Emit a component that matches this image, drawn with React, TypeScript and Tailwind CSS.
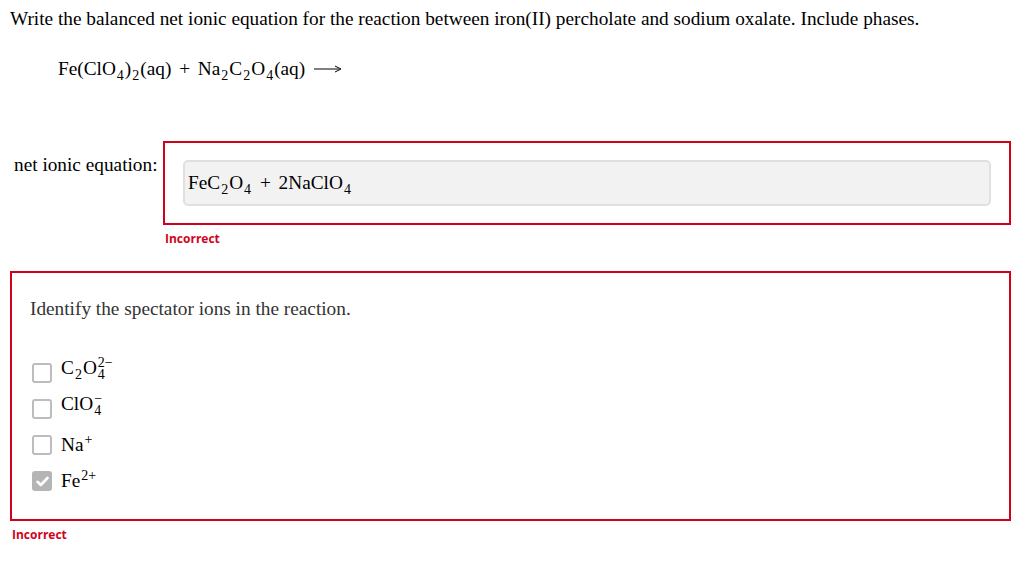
import React from "react";

const serif = "font-['Liberation_Serif','Times_New_Roman',serif]";
const red = "border-[#d0021b]";

function Sub({ children }: { children: React.ReactNode }) {
  return <span className="text-[14px] relative top-[5px] leading-none ml-[1px] mr-[1px]">{children}</span>;
}

function Sup({ children }: { children: React.ReactNode }) {
  return <span className="text-[14px] relative top-[-7px] leading-none ml-[1px]">{children}</span>;
}

function SupSub({ sup, sub }: { sup: string; sub: string }) {
  return (
    <span className="inline-flex flex-col align-baseline text-[14px] leading-[12px] relative top-[-7px] ml-[1px]">
      <span>{sup}</span>
      <span>{sub}</span>
    </span>
  );
}

function Plus() {
  return <span className="mx-[3px]">+</span>;
}

function Check({ checked }: { checked?: boolean }) {
  return (
    <span
      className={
        "w-[20px] h-[20px] rounded-[3px] flex items-center justify-center shrink-0 " +
        (checked ? "bg-[#b5b5b5]" : "border-2 border-[#bdbdbd] bg-white")
      }
    >
      {checked && (
        <svg width="13" height="11" viewBox="0 0 13 11">
          <path d="M1.5 5.8 L4.8 9 L11.5 2" fill="none" stroke="white" strokeWidth="2.6" strokeLinecap="round" strokeLinejoin="round" />
        </svg>
      )}
    </span>
  );
}

export default function App() {
  const options = [
    { label: <>C<Sub>2</Sub>O<SupSub sup="2−" sub="4" /></>, checked: false },
    { label: <>ClO<SupSub sup="−" sub="4" /></>, checked: false },
    { label: <>Na<Sup>+</Sup></>, checked: false },
    { label: <>Fe<Sup>2+</Sup></>, checked: true },
  ];

  return (
    <div className={`w-[1024px] h-[580px] bg-white text-black ${serif} text-[19.3px] overflow-hidden`}>
      <p className="pl-[10px] pt-[8px] leading-[22px]">
        Write the balanced net ionic equation for the reaction between iron(II) percholate and sodium oxalate. Include phases.
      </p>

      <p className="pl-[58px] mt-[28px] leading-[22px]">
        Fe(ClO<Sub>4</Sub>)<Sub>2</Sub>(aq) <Plus /> Na<Sub>2</Sub>C<Sub>2</Sub>O<Sub>4</Sub>(aq)
        <span className="ml-[9px] inline-block align-middle relative top-[-2px]">
          <svg width="28" height="8" viewBox="0 0 28 8">
            <path d="M0 4 H25" stroke="black" strokeWidth="1" />
            <path d="M21 1 L27 4 L21 7" fill="none" stroke="black" strokeWidth="1" />
          </svg>
        </span>
      </p>

      <div className="flex mt-[61px]">
        <div className="pl-[14px] pt-[13px] w-[163px] leading-[22px]">net ionic equation:</div>
        <div>
          <div className={`w-[848px] h-[84px] border-2 ${red} px-[18px] pt-[17px]`}>
            <div className="h-[46px] rounded-[5px] border-2 border-[#e0e0e0] bg-[#f2f2f2] pl-[3px] pt-[10px] leading-[22px]">
              FeC<Sub>2</Sub>O<Sub>4</Sub> <Plus /> 2NaClO<Sub>4</Sub>
            </div>
          </div>
          <div className="font-['Open_Sans',sans-serif] font-bold text-[12px] text-[#d0021b] pl-[2px] pt-[5px]">Incorrect</div>
        </div>
      </div>

      <div className={`ml-[10px] mt-[23px] w-[1001px] h-[250px] border-2 ${red} pl-[18px] pt-[25px]`}>
        <div className="text-[#333] leading-[22px]">Identify the spectator ions in the reaction.</div>
        <div className="mt-[43px] flex flex-col gap-[16px] pl-[2px]">
          {options.map((o, i) => (
            <div key={i} className="flex items-center gap-[9px] h-[20px]">
              <Check checked={o.checked} />
              <span className="leading-[20px]">{o.label}</span>
            </div>
          ))}
        </div>
      </div>
      <div className="font-['Open_Sans',sans-serif] font-bold text-[12px] text-[#d0021b] pl-[12px] pt-[5px]">Incorrect</div>
    </div>
  );
}
